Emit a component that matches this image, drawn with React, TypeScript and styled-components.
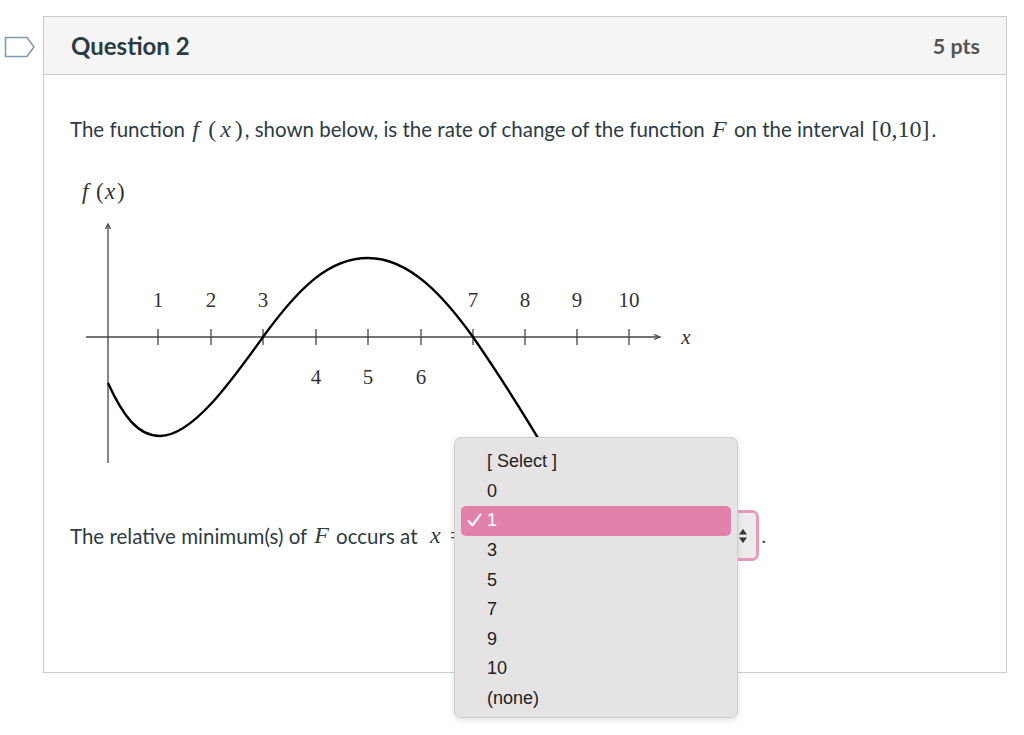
import React from "react";
import styled, { createGlobalStyle } from "styled-components";

const Global = createGlobalStyle`
  html, body { margin: 0; padding: 0; background: #fff; }
  body { font-family: Lato, "Open Sans", sans-serif; color: #2d3b45; }
`;

const Page = styled.div`
  position: relative;
  width: 1024px;
  height: 735px;
  padding-top: 16px;
  box-sizing: border-box;
  display: flex;
  align-items: flex-start;
`;

const Gutter = styled.div`
  width: 43px;
  padding-top: 20px;
  display: flex;
  justify-content: flex-start;
  padding-left: 4px;
  box-sizing: border-box;
`;

const Card = styled.div`
  width: 964px;
  border: 1px solid #c7cdd1;
  box-sizing: border-box;
  background: #fff;
`;

const Header = styled.div`
  height: 58px;
  background: #f5f5f5;
  border-bottom: 1px solid #c7cdd1;
  display: flex;
  align-items: center;
  justify-content: space-between;
  padding: 0 26px 0 27px;
  box-sizing: border-box;
`;

const Title = styled.div`
  font-size: 24px;
  font-weight: 700;
  color: #2d3b45;
`;

const Points = styled.div`
  font-size: 21.5px;
  font-weight: 700;
  color: #555;
`;

const Body = styled.div`
  padding: 40px 26px 0 26px;
  height: 597px;
  box-sizing: border-box;
`;

const Para = styled.p`
  margin: 0;
  font-size: 20.5px;
  line-height: 28px;
  color: #2d3b45;
`;

const Math = styled.span<{ $upright?: boolean }>`
  font-family: "Liberation Serif", "DejaVu Serif", serif;
  font-style: ${(p) => (p.$upright ? "normal" : "italic")};
  font-size: 24px;
  padding: 0 2px;
`;

const Graph = styled.svg`
  display: block;
  margin: 30px 0 0 5px;
`;

const AnswerRow = styled.div`
  margin-top: 37px;
  display: flex;
  align-items: center;
  font-size: 20.5px;
`;

const SelectBox = styled.div`
  width: 288px;
  height: 51px;
  margin-left: 6px;
  border: 3px solid #e99bbd;
  border-radius: 7px;
  background: #ececec;
  box-sizing: border-box;
  display: flex;
  justify-content: flex-end;
  align-items: center;
  padding-right: 8px;
`;

const Dot = styled.span`
  margin-left: 2px;
  font-size: 19px;
`;

const Menu = styled.div`
  position: absolute;
  left: 454px;
  top: 437px;
  width: 284px;
  height: 281px;
  background: #e5e3e4;
  border: 1px solid #cfcdce;
  border-radius: 7px;
  box-shadow: 0 2px 6px rgba(0,0,0,0.12);
  box-sizing: border-box;
  padding: 9px 6px;
  font-family: "Liberation Sans", Arial, sans-serif;
  font-size: 18px;
  color: #222;
`;

const Item = styled.div<{ $active?: boolean }>`
  height: 29.6px;
  display: flex;
  align-items: center;
  border-radius: 5px;
  padding-left: 26px;
  position: relative;
  background: ${(p) => (p.$active ? "#e282ab" : "transparent")};
  color: ${(p) => (p.$active ? "#fff" : "#222")};
`;

const CheckMark = styled.svg`
  position: absolute;
  left: 6px;
  top: 7px;
`;

const BookmarkIcon = () => (
  <svg width="32" height="22" viewBox="0 0 32 22">
    <path d="M1.5 1.5 H23 L30 11 L23 20.5 H1.5 Z" fill="none" stroke="#7d9ab6" strokeWidth="1.6" />
  </svg>
);

const Arrows = () => (
  <svg width="10" height="16" viewBox="0 0 10 16">
    <path d="M5 1 L9 6.5 H1 Z" fill="#333" />
    <path d="M5 15 L9 9.5 H1 Z" fill="#333" />
  </svg>
);

const ticks = [83, 136, 188, 241, 293, 346, 398, 450, 502, 554];

const FunctionGraph = () => (
  <Graph width="640" height="300" viewBox="0 0 640 300">
    <text x="7" y="26" fontFamily="Liberation Serif, serif" fontStyle="italic" fontSize="23" fill="#333">f</text>
    <text x="21" y="26" fontFamily="Liberation Serif, serif" fontSize="23" fill="#333">(</text>
    <text x="30" y="26" fontFamily="Liberation Serif, serif" fontStyle="italic" fontSize="23" fill="#333">x</text>
    <text x="42" y="26" fontFamily="Liberation Serif, serif" fontSize="23" fill="#333">)</text>
    <g stroke="#444" strokeWidth="1.3" fill="none">
      <line x1="33" y1="52" x2="33" y2="290" />
      <path d="M30.5 56 L33 51 L35.5 56" />
      <line x1="11" y1="164" x2="584" y2="164" />
      <path d="M579 161.5 L585 164 L579 166.5" />
      {ticks.map((t) => (
        <line key={t} x1={t} y1="156" x2={t} y2="172" />
      ))}
    </g>
    <g fontFamily="Liberation Serif, serif" fontSize="21" fill="#333" textAnchor="middle">
      <text x="83" y="134">1</text>
      <text x="136" y="134">2</text>
      <text x="188" y="134">3</text>
      <text x="241" y="211">4</text>
      <text x="293" y="211">5</text>
      <text x="346" y="211">6</text>
      <text x="398" y="134">7</text>
      <text x="450" y="134">8</text>
      <text x="502" y="134">9</text>
      <text x="554" y="134">10</text>
      <text x="611" y="171" fontStyle="italic">x</text>
    </g>
    <path
      d="M33,210 C48,243 63,263 85,263 C117,263 155,210 188,164 C225,113 255,85 293,85 C335,85 370,125 398,164 C425,203 447,238 472,280"
      fill="none"
      stroke="#000"
      strokeWidth="2.4"
    />
  </Graph>
);

const options = ["[ Select ]", "0", "1", "3", "5", "7", "9", "10", "(none)"];

export default function App() {
  return (
    <>
      <Global />
      <Page>
        <Gutter>
          <BookmarkIcon />
        </Gutter>
        <Card>
          <Header>
            <Title>Question 2</Title>
            <Points>5 pts</Points>
          </Header>
          <Body>
            <Para>
              The function <Math>f</Math> <Math $upright>(</Math><Math>x</Math><Math $upright>)</Math>, shown below, is the rate of change of the function <Math>F</Math> on the interval <Math $upright>[0,10]</Math>.
            </Para>
            <FunctionGraph />
            <AnswerRow>
              The relative minimum(s) of&nbsp;<Math>F</Math>&nbsp;occurs at&nbsp;&nbsp;<Math>x</Math>&nbsp;<Math $upright>=</Math>
              <SelectBox>
                <Arrows />
              </SelectBox>
              <Dot>.</Dot>
            </AnswerRow>
          </Body>
        </Card>
        <Menu>
          {options.map((o) => (
            <Item key={o} $active={o === "1"}>
              {o === "1" && (
                <CheckMark width="15" height="15" viewBox="0 0 14 14">
                  <path d="M1.5 7.5 L5 11.5 L12.5 1.5" fill="none" stroke="#fff" strokeWidth="2" strokeLinecap="round" strokeLinejoin="round" />
                </CheckMark>
              )}
              {o}
            </Item>
          ))}
        </Menu>
      </Page>
    </>
  );
}
